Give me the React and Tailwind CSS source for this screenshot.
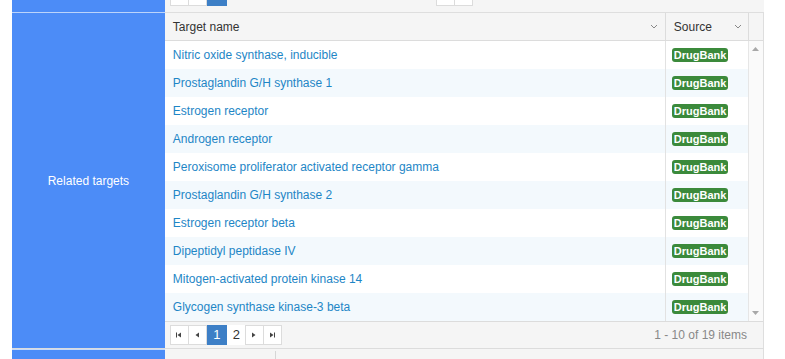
import React from 'react'

const targets = [
  'Nitric oxide synthase, inducible',
  'Prostaglandin G/H synthase 1',
  'Estrogen receptor',
  'Androgen receptor',
  'Peroxisome proliferator activated receptor gamma',
  'Prostaglandin G/H synthase 2',
  'Estrogen receptor beta',
  'Dipeptidyl peptidase IV',
  'Mitogen-activated protein kinase 14',
  'Glycogen synthase kinase-3 beta',
]

const Chevron = () => (
  <svg width="8" height="5" viewBox="0 0 8 5" className="text-[#888]">
    <path d="M1 1 L4 4 L7 1" fill="none" stroke="currentColor" strokeWidth="1" />
  </svg>
)

// pager arrow glyphs
const Arrow = ({ kind }) => {
  const left = kind === 'first' || kind === 'prev'
  const bar = kind === 'first' || kind === 'last'
  return (
    <svg width="8" height="8" viewBox="0 0 8 8" className="text-[#444]">
      {left ? <path d="M6 1.5 L2.5 4 L6 6.5 Z" fill="currentColor" /> : <path d="M2 1.5 L5.5 4 L2 6.5 Z" fill="currentColor" />}
      {bar && (left ? <rect x="1" y="1.5" width="1" height="5" fill="currentColor" /> : <rect x="6" y="1.5" width="1" height="5" fill="currentColor" />)}
    </svg>
  )
}

const PagerBtn = ({ children }) => (
  <span className="w-[19px] h-[20px] flex items-center justify-center bg-white border border-[#dcdcdc] -ml-px first:ml-0">
    {children}
  </span>
)

export default function App() {
  return (
    <div className="w-[785px] h-[359px] bg-white overflow-hidden font-['Liberation_Sans',Arial,sans-serif] text-[12px]">
      <div className="ml-[12px] w-[752px]">
        {/* previous section pager (cut off) */}
        <div className="flex h-[13px]">
          <div className="w-[153px] bg-[#4c8cf7] border-b border-[#bcd4fb]" />
          <div className="flex-1 bg-[#f5f5f5] border-b border-[#dedede] overflow-hidden">
            <div className="flex items-center h-[20px] -mt-[14px] pl-[5px] pr-[18px]">
              <PagerBtn><Arrow kind="first" /></PagerBtn>
              <PagerBtn><Arrow kind="prev" /></PagerBtn>
              <span className="w-[20px] h-[20px] bg-[#3d7fc6] text-white flex items-center justify-center">1</span>
              <div className="w-[210px]" />
              <PagerBtn><Arrow kind="next" /></PagerBtn>
              <PagerBtn><Arrow kind="last" /></PagerBtn>
              <span className="ml-auto text-[#888]">1 - 10 of 169 items</span>
            </div>
          </div>
        </div>

        {/* Related targets */}
        <div className="flex">
          <div className="w-[153px] bg-[#4c8cf7] flex items-center justify-center text-white">
            Related targets
          </div>
          <div className="w-[600px] bg-[#f5f5f5] border-r border-[#dedede]">
            {/* header */}
            <div className="flex h-[28px] border-b border-[#dcdcdc] text-[#333]">
              <div className="w-[500px] flex items-center justify-between pl-[8px] pr-[7px]">
                <span>Target name</span>
                <Chevron />
              </div>
              <div className="w-[83px] flex items-center justify-between pl-[8px] pr-[6px] border-l border-[#dcdcdc]">
                <span>Source</span>
                <Chevron />
              </div>
              <div className="flex-1 border-l border-[#dcdcdc]" />
            </div>
            {/* body */}
            <div className="flex">
              <div className="w-[583px]">
                {targets.map((t, i) => (
                  <div key={t} className={`flex h-[28px] ${i % 2 ? 'bg-[#f3f9fd]' : 'bg-white'}`}>
                    <div className="w-[500px] flex items-center pl-[8px] text-[#1e86c6]">{t}</div>
                    <div className="flex-1 flex items-center pl-[6px] border-l border-[#e2e2e2]">
                      <span className="bg-[#3b8a3b] text-white font-bold text-[11px] leading-[14px] px-[2px] rounded-[3px]">DrugBank</span>
                    </div>
                  </div>
                ))}
              </div>
              <div className="flex-1 bg-[#fafafa] border-l border-[#e6e6e6] flex flex-col justify-between items-center py-[6px]">
                <svg width="7" height="4" viewBox="0 0 7 4"><path d="M0 4 L3.5 0 L7 4 Z" fill="#a8a8a8" /></svg>
                <svg width="7" height="4" viewBox="0 0 7 4"><path d="M0 0 L3.5 4 L7 0 Z" fill="#a8a8a8" /></svg>
              </div>
            </div>
            {/* pager */}
            <div className="flex items-center h-[27px] border-t border-[#dcdcdc] pl-[5px] pr-[16px]">
              <PagerBtn><Arrow kind="first" /></PagerBtn>
              <PagerBtn><Arrow kind="prev" /></PagerBtn>
              <span className="w-[20px] h-[20px] bg-[#3d7fc6] text-white text-[13px] flex items-center justify-center">1</span>
              <span className="w-[19px] h-[20px] bg-white text-[#333] text-[13px] flex items-center justify-center">2</span>
              <PagerBtn><Arrow kind="next" /></PagerBtn>
              <PagerBtn><Arrow kind="last" /></PagerBtn>
              <span className="ml-auto text-[#888]">1 - 10 of 19 items</span>
            </div>
          </div>
        </div>

        {/* next section (cut off) */}
        <div className="flex border-t border-[#dcdcdc] h-[20px]">
          <div className="w-[153px] bg-[#4c8cf7] border-t border-[#c6dafc]" />
          <div className="w-[600px] bg-[#f5f5f5] border-r border-[#dedede] pt-[2px] flex">
            <div className="w-[110px]" />
            <div className="border-l border-[#d6d6d6] h-full" />
          </div>
        </div>
      </div>
    </div>
  )
}
